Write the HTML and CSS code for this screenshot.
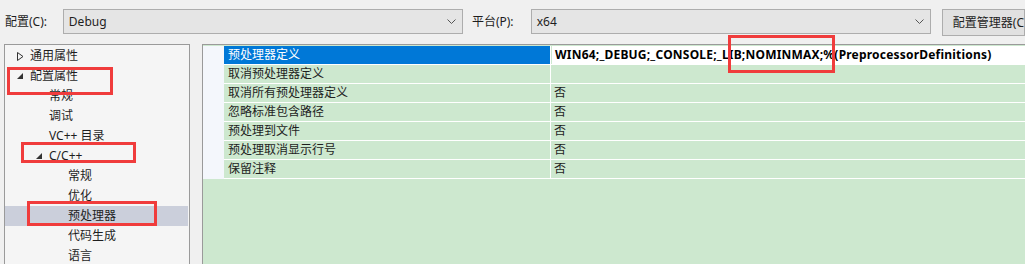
FILE: index.html
```html
<!DOCTYPE html>
<html>
<head>
<meta charset="utf-8">
<link rel="stylesheet" href="styles.css">
</head>
<body>
<div class="page">
  <div class="topbar">
    <span class="lbl lbl-cfg">配置(C):</span>
    <div class="combo combo1"><span>Debug</span><svg class="chev" width="9" height="5" viewBox="0 0 9 5"><path d="M0.5 0.5 L4.5 4.5 L8.5 0.5" fill="none" stroke="#555" stroke-width="1"/></svg></div>
    <span class="lbl lbl-plat">平台(P):</span>
    <div class="combo combo2"><span>x64</span><svg class="chev" width="9" height="5" viewBox="0 0 9 5"><path d="M0.5 0.5 L4.5 4.5 L8.5 0.5" fill="none" stroke="#555" stroke-width="1"/></svg></div>
    <div class="btn">配置管理器(C</div>
  </div>
  <div class="main">
    <div class="tree">
      <div class="node l0"><span class="tw"><svg width="7" height="9" viewBox="0 0 7 9"><path d="M0.5 0.5 L6 4.5 L0.5 8.5 Z" fill="none" stroke="#333" stroke-width="1"/></svg></span>通用属性</div>
      <div class="node l0"><span class="tw"><svg width="6" height="6" viewBox="0 0 6 6"><path d="M6 0 L6 6 L0 6 Z" fill="#333"/></svg></span>配置属性</div>
      <div class="node l1">常规</div>
      <div class="node l1">调试</div>
      <div class="node l1">VC++ 目录</div>
      <div class="node l1x"><span class="tw"><svg width="6" height="6" viewBox="0 0 6 6"><path d="M6 0 L6 6 L0 6 Z" fill="#333"/></svg></span>C/C++</div>
      <div class="node l2">常规</div>
      <div class="node l2">优化</div>
      <div class="node l2 sel">预处理器</div>
      <div class="node l2">代码生成</div>
      <div class="node l2">语言</div>
    </div>
    <div class="grid">
      <div class="row selrow"><div class="gut"></div><div class="name">预处理器定义</div><div class="val bold">WIN64;_DEBUG;_CONSOLE;_LIB;NOMINMAX;%(PreprocessorDefinitions)</div></div>
      <div class="row"><div class="gut"></div><div class="name">取消预处理器定义</div><div class="val"></div></div>
      <div class="row"><div class="gut"></div><div class="name">取消所有预处理器定义</div><div class="val">否</div></div>
      <div class="row"><div class="gut"></div><div class="name">忽略标准包含路径</div><div class="val">否</div></div>
      <div class="row"><div class="gut"></div><div class="name">预处理到文件</div><div class="val">否</div></div>
      <div class="row"><div class="gut"></div><div class="name">预处理取消显示行号</div><div class="val">否</div></div>
      <div class="row"><div class="gut"></div><div class="name">保留注释</div><div class="val">否</div></div>
    </div>
  </div>
  <div class="mark m1"></div>
  <div class="mark m2"></div>
  <div class="mark m3"></div>
  <div class="mark m4"></div>
</div>
</body>
</html>
```

FILE: styles.css
```css
html, body {
  margin: 0;
  padding: 0;
  background: #f0f0f0;
  font-family: "Noto Sans", "Noto Sans CJK SC", sans-serif;
  font-size: 12px;
  color: #1e1e1e;
  overflow: hidden;
}
.page {
  position: relative;
  width: 1025px;
  height: 264px;
  overflow: hidden;
}
.topbar {
  display: flex;
  align-items: flex-start;
  padding-top: 9px;
  height: 35px;
  box-sizing: border-box;
}
.lbl {
  line-height: 25px;
  white-space: nowrap;
}
.lbl-cfg { margin-left: 5px; width: 58px; }
.lbl-plat { margin-left: 9px; width: 59px; }
.combo {
  display: flex;
  align-items: center;
  justify-content: space-between;
  width: 401px;
  height: 25px;
  box-sizing: border-box;
  border: 1px solid #adadad;
  background: #e5e5e5;
  padding: 0 5px 0 5px;
}
.combo span { line-height: 23px; }
.chev { margin-right: 1px; }
.btn {
  margin-left: 11px;
  height: 27px;
  box-sizing: border-box;
  border: 1px solid #adadad;
  background: #e1e1e1;
  padding: 0 0 0 10px;
  line-height: 25px;
  white-space: nowrap;
  flex: 1;
}
.main {
  display: flex;
  margin-top: 9px;
  height: 220px;
}
.tree {
  margin-left: 4px;
  width: 186px;
  box-sizing: border-box;
  border: 1px solid #9a9a9a;
  border-bottom: none;
  background: #f5f5f5;
  padding-top: 1px;
}
.node {
  height: 20px;
  line-height: 20px;
  white-space: nowrap;
  display: flex;
  align-items: center;
}
.tw {
  display: inline-flex;
  align-items: center;
  justify-content: center;
  width: 12px;
  margin-right: 4px;
}
.l0 { padding-left: 9px; }
.l1 { padding-left: 44px; }
.l1x { padding-left: 28px; }
.l2 { padding-left: 63px; }
.sel { background: #cbcfdb; margin-right: 1px; }
.grid {
  margin-left: 12px;
  flex: 1;
  border-left: 1px solid #9a9a9a;
  border-top: 1px solid #9a9a9a;
  background: #cde8cf;
  padding-top: 1px;
}
.row {
  display: flex;
  height: 18px;
  border-bottom: 1px solid #ffffff;
}
.gut {
  width: 21px;
  background: #f4f7fc;
  border-bottom: 1px solid #f4f7fc;
  margin-bottom: -1px;
}
.name {
  width: 327px;
  padding-left: 4px;
  box-sizing: border-box;
  line-height: 18px;
  border-right: 1px solid #ffffff;
  white-space: nowrap;
}
.val {
  flex: 1;
  padding-left: 3px;
  line-height: 18px;
  white-space: nowrap;
}
.selrow .name { background: #0078d7; color: #ffffff; }
.selrow .val { background: #ffffff; margin-left: 1px; color: #000; }
.bold { font-weight: bold; letter-spacing: 0.2px; }
.mark {
  position: absolute;
  border: 3px solid #f03c3c;
  box-sizing: border-box;
}
.m1 { left: 7px; top: 67px; width: 106px; height: 28px; }
.m2 { left: 21px; top: 142px; width: 115px; height: 21px; }
.m3 { left: 27px; top: 201px; width: 130px; height: 25px; }
.m4 { left: 728px; top: 35px; width: 107px; height: 38px; }
```
